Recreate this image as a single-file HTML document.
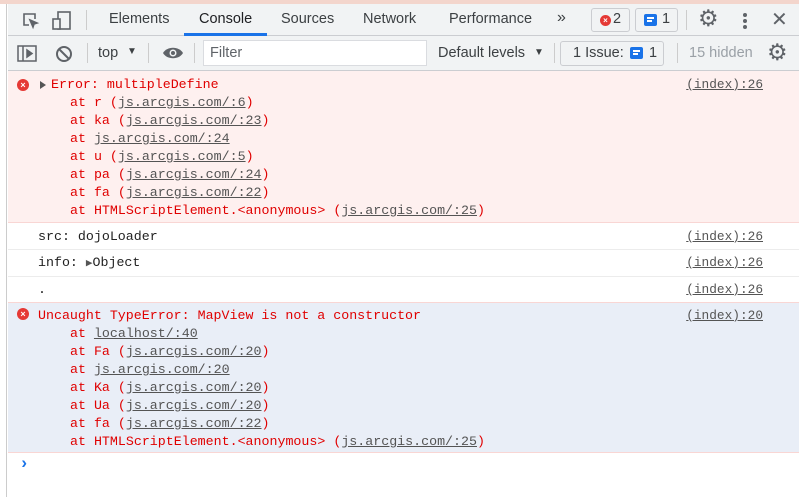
<!DOCTYPE html>
<html><head><style>
*{margin:0;padding:0;box-sizing:border-box}
body{width:799px;height:497px;overflow:hidden;background:#fff;font-family:"Liberation Sans",sans-serif;position:relative}
.abs{position:absolute}
.top{left:0;top:0;width:799px;height:4px;background:#f3d5cc}
.leftcol{left:0;top:4px;width:7px;height:493px;background:#fff;border-right:1px solid #ccc}
.tabbar{left:8px;top:4px;width:791px;height:32px;background:#f1f3f4;border-bottom:1px solid #cbcdd1}
.tb2{left:8px;top:36px;width:791px;height:35px;background:#f1f3f4;border-bottom:1px solid #cbcdd1}
.t{font-size:14.5px;color:#3c4043;position:absolute}
.sep{position:absolute;width:1px;background:#ccc}
.mono{font-family:"Liberation Mono",monospace;font-size:13.3px;position:absolute;white-space:pre;line-height:18px}
.red{color:#e00000}
.lnk{color:#545454;text-decoration:underline}
.src{color:#545454;text-decoration:underline;right:36px;font-size:12.8px}
</style></head><body>
<div class="abs top"></div>
<div class="abs leftcol"></div>
<div class="abs tabbar">
 <svg class="abs" style="left:13px;top:7px" width="20" height="20" viewBox="0 0 20 20" fill="none" stroke="#5f6368" stroke-width="1.6"><path d="M8 14H3V3h11v5"/><path d="M9 9l7 3-3 1-1 3z" fill="#5f6368"/></svg>
 <svg class="abs" style="left:44px;top:6px" width="20" height="22" viewBox="0 0 20 22" fill="none" stroke="#5f6368" stroke-width="1.6"><rect x="6" y="2" width="12" height="17"/><rect x="1" y="9" width="7" height="10" fill="#f1f3f4"/></svg>
 <div class="sep" style="left:78px;top:6px;height:20px"></div>
 <div class="t" style="left:101px;top:7px">Elements</div>
 <div class="t" style="left:191px;top:7px;color:#202124">Console</div>
 <div class="abs" style="left:176px;top:29px;width:83px;height:3px;background:#1a73e8"></div>
 <div class="t" style="left:273px;top:7px">Sources</div>
 <div class="t" style="left:355px;top:7px">Network</div>
 <div class="t" style="left:441px;top:7px">Performance</div>
 <div class="t" style="left:549px;top:5px;font-size:16px">»</div>
 <div class="abs" style="left:583px;top:4px;width:39px;height:24px;border:1px solid #cbcdd1;border-radius:3px"></div>
 <div class="abs" style="left:592px;top:11px;width:11px;height:11px;border-radius:50%;background:#e53935;color:#fff;font-size:8px;text-align:center;line-height:11px;font-weight:bold">×</div>
 <div class="t" style="left:605px;top:7px">2</div>
 <div class="abs" style="left:627px;top:4px;width:43px;height:24px;border:1px solid #cbcdd1;border-radius:3px"></div>
 <div class="abs" style="left:636px;top:10px;width:13px;height:12px;border-radius:2px;background:#1a73e8"><div class="abs" style="left:3px;top:3px;width:7px;height:1.5px;background:#fff"></div><div class="abs" style="left:3px;top:6px;width:5px;height:1.5px;background:#fff"></div></div>
 <div class="t" style="left:654px;top:7px">1</div>
 <div class="sep" style="left:678px;top:6px;height:20px"></div>
 <div class="t" style="left:690px;top:1px;font-size:23px;color:#5f6368">⚙</div>
 <div class="abs" style="left:735px;top:9px;width:4px;height:4px;border-radius:50%;background:#5f6368;box-shadow:0 6px 0 #5f6368,0 12px 0 #5f6368"></div>
 <div class="t" style="left:763px;top:3px;font-size:20px;color:#5f6368">✕</div>
</div>
<div class="abs tb2">
 <svg class="abs" style="left:9px;top:9px" width="20" height="17" viewBox="0 0 20 17" fill="none" stroke="#5f6368" stroke-width="1.5"><rect x="1" y="1" width="18" height="15"/><path d="M6 1v15"/><path d="M10 5l5 3.5-5 3.5z" fill="#5f6368"/></svg>
 <svg class="abs" style="left:47px;top:9px" width="18" height="18" viewBox="0 0 18 18" fill="none" stroke="#5f6368" stroke-width="2"><circle cx="9" cy="9" r="7"/><path d="M4 4l10 10"/></svg>
 <div class="sep" style="left:79px;top:7px;height:20px"></div>
 <div class="t" style="left:90px;top:9px">top</div>
 <div class="t" style="left:119px;top:10px;font-size:10px">▼</div>
 <div class="sep" style="left:140px;top:7px;height:20px"></div>
 <svg class="abs" style="left:154px;top:10px" width="22" height="14" viewBox="0 0 22 14"><path d="M1 7C5 0 17 0 21 7 17 14 5 14 1 7z" fill="#5f6368"/><circle cx="11" cy="7" r="3.5" fill="#f1f3f4"/><circle cx="11" cy="7" r="2" fill="#5f6368"/></svg>
 <div class="sep" style="left:186px;top:7px;height:20px"></div>
 <div class="abs" style="left:195px;top:4px;width:224px;height:26px;background:#fff;border:1px solid #dadce0"></div>
 <div class="t" style="left:202px;top:9px;color:#5f6368">Filter</div>
 <div class="t" style="left:430px;top:9px">Default levels</div>
 <div class="t" style="left:526px;top:11px;font-size:10px">▼</div>
 <div class="sep" style="left:546px;top:7px;height:20px"></div>
 <div class="abs" style="left:552px;top:5px;width:104px;height:25px;border:1px solid #cbcdd1;border-radius:3px"></div>
 <div class="t" style="left:565px;top:9px">1 Issue:</div>
 <div class="abs" style="left:622px;top:11px;width:13px;height:12px;border-radius:2px;background:#1a73e8"><div class="abs" style="left:3px;top:3px;width:7px;height:1.5px;background:#fff"></div><div class="abs" style="left:3px;top:6px;width:5px;height:1.5px;background:#fff"></div></div>
 <div class="t" style="left:641px;top:9px">1</div>
 <div class="sep" style="left:669px;top:7px;height:20px"></div>
 <div class="t" style="left:681px;top:9px;color:#9aa0a6">15 hidden</div>
 <div class="t" style="left:759px;top:3px;font-size:23px;color:#5f6368">⚙</div>
</div>
<!-- error 1 -->
<div class="abs" style="left:8px;top:71px;width:791px;height:152px;background:#fef0ef;border-bottom:1px solid #f9d6d4"></div>
<div class="abs" style="left:17px;top:79px;width:12px;height:12px;border-radius:50%;background:#e53935;color:#fff;font-size:9px;text-align:center;line-height:12px;font-weight:bold">×</div>
<div class="abs" style="left:40px;top:81px;width:0;height:0;border-left:6px solid #555;border-top:4px solid transparent;border-bottom:4px solid transparent"></div>
<div class="mono red" style="left:51px;top:76px">Error: multipleDefine</div>
<div class="mono red" style="left:70px;top:94px">at r (<span class="lnk">js.arcgis.com/:6</span>)
at ka (<span class="lnk">js.arcgis.com/:23</span>)
at <span class="lnk">js.arcgis.com/:24</span>
at u (<span class="lnk">js.arcgis.com/:5</span>)
at pa (<span class="lnk">js.arcgis.com/:24</span>)
at fa (<span class="lnk">js.arcgis.com/:22</span>)
at HTMLScriptElement.&lt;anonymous&gt; (<span class="lnk">js.arcgis.com/:25</span>)</div>
<div class="mono src" style="top:76px">(index):26</div>
<!-- logs -->
<div class="mono" style="left:38px;top:228px;color:#222">src: dojoLoader</div>
<div class="mono src" style="top:228px">(index):26</div>
<div class="abs" style="left:8px;top:249px;width:791px;height:1px;background:#ececec"></div>
<div class="mono" style="left:38px;top:254px;color:#222">info: <span style="color:#555;font-size:11px">▶</span>Object</div>
<div class="mono src" style="top:254px">(index):26</div>
<div class="abs" style="left:8px;top:276px;width:791px;height:1px;background:#ececec"></div>
<div class="mono" style="left:38px;top:281px;color:#222">.</div>
<div class="mono src" style="top:281px">(index):26</div>
<!-- error 2 -->
<div class="abs" style="left:8px;top:302px;width:791px;height:151px;background:#e9eef7;border-top:1px solid #f9d6d4;border-bottom:1px solid #f9d6d4"></div>
<div class="abs" style="left:17px;top:308px;width:12px;height:12px;border-radius:50%;background:#e53935;color:#fff;font-size:9px;text-align:center;line-height:12px;font-weight:bold">×</div>
<div class="mono red" style="left:38px;top:307px">Uncaught TypeError: MapView is not a constructor</div>
<div class="mono red" style="left:70px;top:325px">at <span class="lnk">localhost/:40</span>
at Fa (<span class="lnk">js.arcgis.com/:20</span>)
at <span class="lnk">js.arcgis.com/:20</span>
at Ka (<span class="lnk">js.arcgis.com/:20</span>)
at Ua (<span class="lnk">js.arcgis.com/:20</span>)
at fa (<span class="lnk">js.arcgis.com/:22</span>)
at HTMLScriptElement.&lt;anonymous&gt; (<span class="lnk">js.arcgis.com/:25</span>)</div>
<div class="mono src" style="top:307px">(index):20</div>
<div class="abs" style="left:19px;top:455px;color:#1a73e8;font-size:17px;font-family:'Liberation Mono',monospace;font-weight:bold">›</div>
</body></html>
